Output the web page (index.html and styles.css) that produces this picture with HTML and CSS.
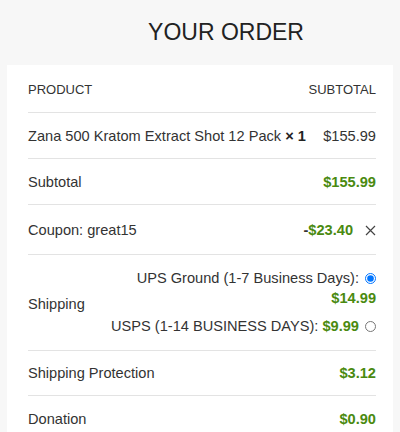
FILE: index.html
```html
<!DOCTYPE html>
<html>
<head>
<meta charset="utf-8">
<link rel="stylesheet" href="styles.css">
</head>
<body>
<h2 class="title">YOUR ORDER</h2>
<div class="card">
  <div class="row head">
    <span>PRODUCT</span>
    <span>SUBTOTAL</span>
  </div>
  <div class="row">
    <span>Zana 500 Kratom Extract Shot 12 Pack <strong class="qty">×&nbsp;1</strong></span>
    <span>$155.99</span>
  </div>
  <div class="row">
    <span>Subtotal</span>
    <span class="price">$155.99</span>
  </div>
  <div class="row coupon">
    <span>Coupon: great15</span>
    <span class="coupon-val"><span class="minus">-</span><span class="price">$23.40</span><svg class="remove" width="11" height="11" viewBox="0 0 11 11"><path d="M1 1L10 10M10 1L1 10" stroke="#444" stroke-width="1.2" fill="none"/></svg></span>
  </div>
  <div class="row shipping">
    <span class="ship-label">Shipping</span>
    <ul class="methods">
      <li>
        <div class="opt">UPS Ground (1-7 Business Days): <input type="radio" name="ship" checked></div>
        <div class="price">$14.99</div>
      </li>
      <li>
        <div class="opt">USPS (1-14 BUSINESS DAYS): <span class="price">$9.99</span> <input type="radio" name="ship"></div>
      </li>
    </ul>
  </div>
  <div class="row protect">
    <span>Shipping Protection</span>
    <span class="price">$3.12</span>
  </div>
  <div class="row last">
    <span>Donation</span>
    <span class="price">$0.90</span>
  </div>
</div>
</body>
</html>
```
FILE: styles.css
```css
html, body {
  margin: 0;
  padding: 0;
  background: #f7f7f7;
  font-family: "Liberation Sans", Arial, sans-serif;
  color: #333;
}
.title {
  margin: 0;
  padding: 17px 0 0 52px;
  height: 48px;
  text-align: center;
  font-size: 23px;
  font-weight: normal;
  line-height: 30px;
  color: #222;
}
.card {
  margin: 0 7px;
  background: #fff;
  padding: 0 17px 0 21px;
}
.row {
  display: flex;
  justify-content: space-between;
  align-items: center;
  padding: 15px 0 14px;
  border-bottom: 1px solid #e3e3e3;
  font-size: 14.6px;
  line-height: 16px;
}
.row.head {
  padding: 17px 0 14px;
  font-size: 13px;
  height: 16px;
}
.row.last {
  border-bottom: none;
}
.row.protect {
  padding: 14px 0 14px;
}
.qty {
  font-weight: bold;
  color: #222;
}
.price {
  color: #4a8a10;
  font-weight: bold;
}
.coupon {
  padding: 15px 0 14px;
}
.coupon-val {
  display: flex;
  align-items: center;
  line-height: 20px;
}
.minus {
  font-weight: bold;
  color: #333;
}
.remove {
  margin-left: 12px;
  display: block;
}
.shipping {
  padding: 13px 0 14px;
}
.ship-label {
  margin-top: 3px;
}
.methods {
  list-style: none;
  margin: 0;
  padding: 0;
  text-align: right;
  line-height: 20px;
}
.methods li + li {
  margin-top: 8px;
}
.opt input {
  margin: 0 0 0 2px;
  width: 11px;
  height: 11px;
  vertical-align: -1px;
}
```
